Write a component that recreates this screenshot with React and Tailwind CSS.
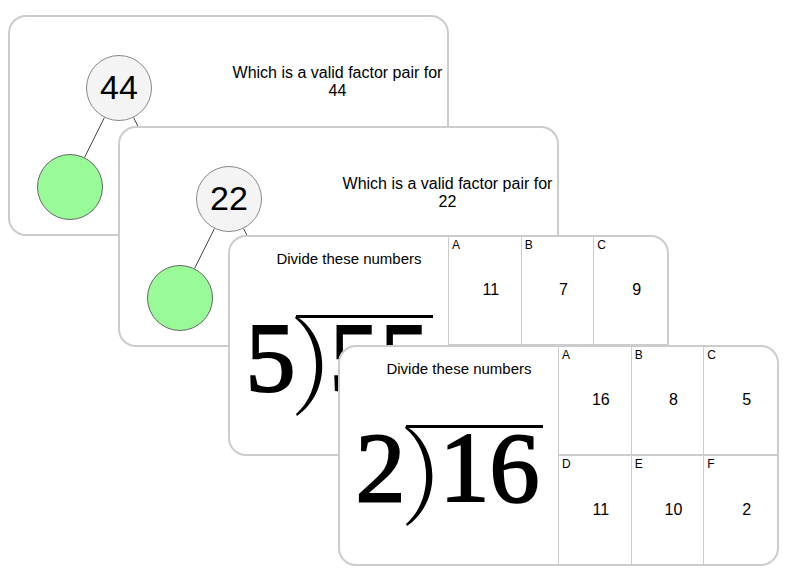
import clsx from "clsx";

const Card = ({ className, children }) => (
  <div
    className={clsx(
      "relative flex h-[221px] w-[441px] shrink-0 overflow-hidden rounded-[18px] border-2 border-[#ccc] bg-white",
      className
    )}
  >
    {children}
  </div>
);

const FactorTree = ({ value }) => (
  <svg width="218" height="217" viewBox="0 0 218 217" className="shrink-0">
    <line x1="94.4" y1="100.6" x2="74.6" y2="140.4" stroke="#444" />
    <line x1="123.6" y1="100.6" x2="143.4" y2="140.4" stroke="#444" />
    <circle cx="109" cy="71" r="32.5" fill="#f4f4f4" stroke="#888" />
    <text
      x="109"
      y="82"
      textAnchor="middle"
      fontSize="34"
      fontFamily="Liberation Sans, Arial, sans-serif"
      fill="#000"
    >
      {value}
    </text>
    <circle cx="60" cy="170" r="32.5" fill="#98fb98" stroke="#666" />
    <circle cx="158" cy="170" r="32.5" fill="#f4f4f4" stroke="#888" />
  </svg>
);

const FactorCard = ({ value, className }) => (
  <Card className={className}>
    <FactorTree value={value} />
    <div className="flex-1 pt-[47px] text-center text-base leading-[18px]">
      Which is a valid factor pair for {value}
    </div>
  </Card>
);

const LongDivision = ({ divisor, dividend }) => (
  <div className="mt-[48px] flex justify-center font-['Liberation_Serif',serif] text-[100px] leading-[80px] text-black [-webkit-text-stroke:2px_black]">
    <span className="pt-[3px]">{divisor}</span>
    <div className="flex border-t-[3px] border-black pr-[3px]">
      <svg width="34" height="97" viewBox="0 0 34 97" className="shrink-0 overflow-visible">
        <path d="M0 -2 C35 20 35 75 1 98 L0 96 C27 73 27 22 -1 0 Z" fill="#000" />
      </svg>
      <span>{dividend}</span>
    </div>
  </div>
);

const AnswerGrid = ({ answers }) => (
  <div className="grid flex-1 grid-cols-3 grid-rows-2 border-l border-[#ccc]">
    {answers.map((a, i) => (
      <div
        key={a.label}
        className={clsx(
          "relative flex items-center justify-center border-[#ccc] pl-3",
          i % 3 !== 2 && "border-r",
          i < 3 && "border-b-2"
        )}
      >
        <span className="absolute left-[3px] top-[2px] text-[12px] leading-none">{a.label}</span>
        <span className="text-base">{a.value}</span>
      </div>
    ))}
  </div>
);

const DivisionCard = ({ divisor, dividend, answers, className }) => (
  <Card className={className}>
    <div className="flex w-[218px] shrink-0 flex-col">
      <p className="pl-5 pt-[13px] text-center text-[15px] leading-[17px]">Divide these numbers</p>
      <LongDivision divisor={divisor} dividend={dividend} />
    </div>
    <AnswerGrid answers={answers} />
  </Card>
);

const labels = ["A", "B", "C", "D", "E", "F"];
const toAnswers = (values) => values.map((value, i) => ({ label: labels[i], value }));

export default function App() {
  return (
    <div className="flex min-h-screen flex-col bg-white pl-[8px] pt-[15px] font-['Liberation_Sans',Arial,sans-serif] text-black">
      <FactorCard value={44} className="z-[1]" />
      <FactorCard value={22} className="z-[2] -mt-[110px] ml-[110px]" />
      <DivisionCard
        divisor={5}
        dividend={55}
        answers={toAnswers([11, 7, 9, 10, 5, 12])}
        className="z-[3] -mt-[112px] ml-[220px]"
      />
      <DivisionCard
        divisor={2}
        dividend={16}
        answers={toAnswers([16, 8, 5, 11, 10, 2])}
        className="z-[4] -mt-[111px] ml-[330px]"
      />
    </div>
  );
}
